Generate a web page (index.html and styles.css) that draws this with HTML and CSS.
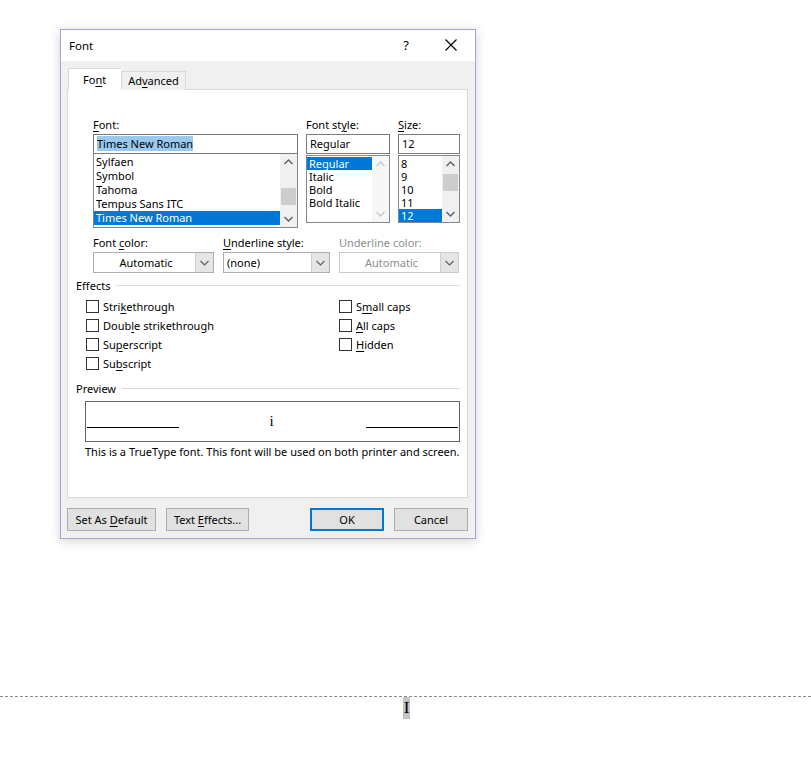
FILE: index.html
```html
<!DOCTYPE html>
<html>
<head>
<meta charset="utf-8">
<link rel="stylesheet" href="styles.css">
</head>
<body>
<div class="page">
  <div class="dialog">
    <div class="titlebar">
      <span class="title">Font</span>
      <span class="help">?</span>
      <svg class="close" width="12" height="12" viewBox="0 0 12 12"><path d="M0.5 0.5L11.5 11.5M11.5 0.5L0.5 11.5" stroke="#000" stroke-width="1.2" fill="none"/></svg>
    </div>
    <div class="body">
      <div class="tabs">
        <div class="tab active">Fo<u>n</u>t</div>
        <div class="tab">Ad<u>v</u>anced</div>
      </div>
      <div class="panel">
        <div class="fontrow">
          <div class="col col-font">
            <div class="label"><u>F</u>ont:</div>
            <div class="input"><span class="sel-text">Times New Roman</span></div>
            <div class="list">
              <div class="items">
                <div class="item">Sylfaen</div>
                <div class="item">Symbol</div>
                <div class="item">Tahoma</div>
                <div class="item">Tempus Sans ITC</div>
                <div class="item selected">Times New Roman</div>
              </div>
              <div class="scroll">
                <svg class="chev" width="9" height="6" viewBox="0 0 9 6"><path d="M0.5 5L4.5 1L8.5 5" stroke="#606060" stroke-width="1.4" fill="none"/></svg>
                <div class="track"><div class="thumb thumb-font"></div></div>
                <svg class="chev" width="9" height="6" viewBox="0 0 9 6"><path d="M0.5 1L4.5 5L8.5 1" stroke="#606060" stroke-width="1.4" fill="none"/></svg>
              </div>
            </div>
          </div>
          <div class="col col-style">
            <div class="label">Font st<u>y</u>le:</div>
            <div class="input">Regular</div>
            <div class="list short">
              <div class="items tight">
                <div class="item selected">Regular</div>
                <div class="item">Italic</div>
                <div class="item">Bold</div>
                <div class="item">Bold Italic</div>
              </div>
              <div class="scroll disabled">
                <svg class="chev" width="9" height="6" viewBox="0 0 9 6"><path d="M0.5 5L4.5 1L8.5 5" stroke="#c8c8c8" stroke-width="1.4" fill="none"/></svg>
                <div class="track"></div>
                <svg class="chev" width="9" height="6" viewBox="0 0 9 6"><path d="M0.5 1L4.5 5L8.5 1" stroke="#c8c8c8" stroke-width="1.4" fill="none"/></svg>
              </div>
            </div>
          </div>
          <div class="col col-size">
            <div class="label"><u>S</u>ize:</div>
            <div class="input">12</div>
            <div class="list short">
              <div class="items tight">
                <div class="item">8</div>
                <div class="item">9</div>
                <div class="item">10</div>
                <div class="item">11</div>
                <div class="item selected">12</div>
              </div>
              <div class="scroll">
                <svg class="chev" width="9" height="6" viewBox="0 0 9 6"><path d="M0.5 5L4.5 1L8.5 5" stroke="#606060" stroke-width="1.4" fill="none"/></svg>
                <div class="track"><div class="thumb thumb-size"></div></div>
                <svg class="chev" width="9" height="6" viewBox="0 0 9 6"><path d="M0.5 1L4.5 5L8.5 1" stroke="#606060" stroke-width="1.4" fill="none"/></svg>
              </div>
            </div>
          </div>
        </div>

        <div class="droprow">
          <div class="dcol dcol-color">
            <div class="label">Font <u>c</u>olor:</div>
            <div class="combo"><span class="combo-text center">Automatic</span><span class="combo-btn"><svg width="9" height="6" viewBox="0 0 9 6"><path d="M0.5 1L4.5 5L8.5 1" stroke="#606060" stroke-width="1.2" fill="none"/></svg></span></div>
          </div>
          <div class="dcol dcol-ustyle">
            <div class="label"><u>U</u>nderline style:</div>
            <div class="combo"><span class="combo-text">(none)</span><span class="combo-btn"><svg width="9" height="6" viewBox="0 0 9 6"><path d="M0.5 1L4.5 5L8.5 1" stroke="#606060" stroke-width="1.2" fill="none"/></svg></span></div>
          </div>
          <div class="dcol dcol-ucolor disabled">
            <div class="label">Underline color:</div>
            <div class="combo"><span class="combo-text center">Automatic</span><span class="combo-btn"><svg width="9" height="6" viewBox="0 0 9 6"><path d="M0.5 1L4.5 5L8.5 1" stroke="#606060" stroke-width="1.2" fill="none"/></svg></span></div>
          </div>
        </div>

        <div class="group">
          <div class="group-head"><span>Effects</span><span class="rule"></span></div>
          <div class="effects">
            <div class="checks left">
              <label class="check"><span class="box"></span>Stri<u>k</u>ethrough</label>
              <label class="check"><span class="box"></span>Doub<u>l</u>e strikethrough</label>
              <label class="check"><span class="box"></span>Su<u>p</u>erscript</label>
              <label class="check"><span class="box"></span>Su<u>b</u>script</label>
            </div>
            <div class="checks right">
              <label class="check"><span class="box"></span>S<u>m</u>all caps</label>
              <label class="check"><span class="box"></span><u>A</u>ll caps</label>
              <label class="check"><span class="box"></span><u>H</u>idden</label>
            </div>
          </div>
        </div>

        <div class="group preview-group">
          <div class="group-head"><span>Preview</span><span class="rule"></span></div>
          <div class="preview">
            <span class="pline"></span>
            <span class="pchar">i</span>
            <span class="pline"></span>
          </div>
          <div class="note">This is a TrueType font. This font will be used on both printer and screen.</div>
        </div>
      </div>

      <div class="buttons">
        <div class="btn btn-default">Set As <u>D</u>efault</div>
        <div class="btn btn-effects">Text <u>E</u>ffects...</div>
        <div class="spacer"></div>
        <div class="btn btn-ok">OK</div>
        <div class="btn btn-cancel">Cancel</div>
      </div>
    </div>
  </div>

  <div class="doc">
    <div class="dashed"></div>
    <div class="caret"><span class="ibeam">I</span></div>
  </div>
</div>
</body>
</html>
```

FILE: styles.css
```css
html, body {
  margin: 0;
  padding: 0;
  background: #ffffff;
}
body {
  font-family: "Noto Sans", "Open Sans", sans-serif;
  font-size: 11px;
  color: #000;
}
u { text-decoration: underline; text-underline-offset: 2px; }
.page {
  padding: 29px 0 0 60px;
  position: relative;
  height: 735px;
}
.dialog {
  width: 414px;
  height: 508px;
  border: 1px solid #a8a3cf;
  background: #f0f0f0;
  box-shadow: 0 2px 10px rgba(0,0,0,0.18);
  display: flex;
  flex-direction: column;
}
.titlebar {
  height: 31px;
  background: #fff;
  display: flex;
  align-items: center;
  padding-left: 8px;
  font-size: 11.5px;
}
.title { flex: 1; margin-top: -1px; }
.help { margin-right: 36px; font-size: 13px; margin-top: -2px; }
.close { margin-right: 18px; margin-top: -1px; }
.body {
  flex: 1;
  padding: 7px 7px 0 6px;
  display: flex;
  flex-direction: column;
}
.tabs {
  display: flex;
  align-items: flex-end;
  height: 22px;
  margin-left: 1px;
  position: relative;
  z-index: 1;
  margin-bottom: -1px;
}
.tab {
  height: 19px;
  line-height: 18px;
  padding: 0 6px;
  border: 1px solid #d9d9d9;
  border-bottom: none;
  background: #f0f0f0;
  box-sizing: border-box;
}
.tab.active {
  height: 22px;
  line-height: 22px;
  background: #fff;
  padding: 0 15px 0 14px;
  border-right: none;
}
.panel {
  background: #fff;
  border: 1px solid #d9d9d9;
  height: 409px;
  box-sizing: border-box;
  padding: 26px 7px 0 8px;
}
.fontrow {
  display: flex;
  padding-left: 17px;
}
.col { display: flex; flex-direction: column; }
.col-font { width: 205px; margin-right: 8px; }
.col-style { width: 84px; margin-right: 8px; }
.col-size { width: 62px; }
.label { height: 17px; line-height: 17px; margin-bottom: 1px; }
.input {
  height: 20px;
  border: 1px solid #7a7a7a;
  box-sizing: border-box;
  line-height: 18px;
  padding-left: 3px;
  background: #fff;
}
.sel-text { background: #99c9ef; }
.list {
  border: 1px solid #828790;
  border-top: none;
  height: 74px;
  box-sizing: border-box;
  display: flex;
}
.list.short { height: 68px; margin-top: 1px; border-top: 1px solid #828790; }
.items { flex: 1; padding-top: 1px; }
.item { height: 14px; line-height: 14px; padding-left: 2px; }
.items.tight .item { height: 13px; line-height: 13px; }
.item.selected { background: #0078d7; color: #fff; }
.scroll {
  width: 17px;
  background: #f0f0f0;
  display: flex;
  flex-direction: column;
  align-items: center;
}
.scroll .chev { margin: 5px 0; flex: none; }
.track { flex: 1; width: 100%; position: relative; }
.thumb { background: #cdcdcd; position: absolute; left: 1px; right: 1px; }
.thumb-font { top: 18px; height: 17px; }
.thumb-size { top: 2px; height: 17px; }
.scroll.disabled { background: #f7f7f7; }

.droprow {
  display: flex;
  padding-left: 17px;
  margin-top: 6px;
}
.dcol { display: flex; flex-direction: column; }
.dcol-color { width: 121px; margin-right: 9px; }
.dcol-ustyle { width: 107px; margin-right: 9px; }
.dcol-ucolor { width: 120px; }
.combo {
  height: 21px;
  border: 1px solid #adadad;
  box-sizing: border-box;
  display: flex;
  background: #fff;
}
.combo-text { flex: 1; line-height: 19px; padding-left: 3px; }
.combo-text.center { text-align: center; }
.combo-btn {
  width: 17px;
  background: #e5e5e5;
  border-left: 1px solid #cfcfcf;
  display: flex;
  align-items: center;
  justify-content: center;
}
.disabled .label, .disabled .combo-text { color: #8d8d8d; }
.disabled .combo { border-color: #cccccc; }

.group { margin-top: 4px; }
.group-head {
  display: flex;
  align-items: center;
  height: 16px;
}
.group-head .rule {
  flex: 1;
  height: 1px;
  background: #dcdcdc;
  margin-left: 6px;
  margin-top: 1px;
}
.effects {
  display: flex;
  padding-left: 10px;
  margin-top: 4px;
}
.checks { display: flex; flex-direction: column; }
.checks.left { width: 253px; flex: none; }
.checks.right { flex: 1; }
.check {
  display: flex;
  align-items: center;
  height: 19px;
}
.box {
  width: 13px;
  height: 13px;
  border: 1px solid #333;
  box-sizing: border-box;
  background: #fff;
  margin-right: 4px;
  flex: none;
}
.preview-group { margin-top: 7px; }
.preview {
  margin: 5px 0 0 9px;
  width: 375px;
  height: 41px;
  border: 1px solid #646464;
  box-sizing: border-box;
  display: flex;
  align-items: flex-end;
  padding: 0 1px 13px 1px;
}
.pline { width: 92px; height: 1px; background: #000; flex: none; }
.pchar {
  flex: 1;
  text-align: center;
  font-family: "Liberation Serif", serif;
  font-size: 15px;
  line-height: 12px;
  transform: translate(-1px, -1px);
}
.note { margin: 2px 0 0 9px; white-space: nowrap; }

.buttons {
  display: flex;
  margin-top: 10px;
  height: 23px;
}
.btn {
  height: 23px;
  box-sizing: border-box;
  border: 1px solid #adadad;
  background: #e1e1e1;
  line-height: 21px;
  text-align: center;
}
.btn-default { width: 89px; }
.btn-effects { width: 83px; margin-left: 10px; }
.spacer { flex: 1; }
.btn-ok { width: 74px; border: 2px solid #0078d7; line-height: 19px; }
.btn-cancel { width: 74px; margin-left: 10px; }

.doc {
  position: relative;
  margin-left: -60px;
  margin-top: 157px;
}
.dashed {
  height: 0;
  border-top: 1px dashed #8a8a8a;
}
.caret {
  position: absolute;
  left: 403px;
  top: 1px;
  width: 7px;
  height: 22px;
  background: #c4c4c4;
  text-align: center;
}
.ibeam {
  font-family: "Liberation Serif", serif;
  font-size: 17px;
  line-height: 22px;
  color: #000;
}
```
